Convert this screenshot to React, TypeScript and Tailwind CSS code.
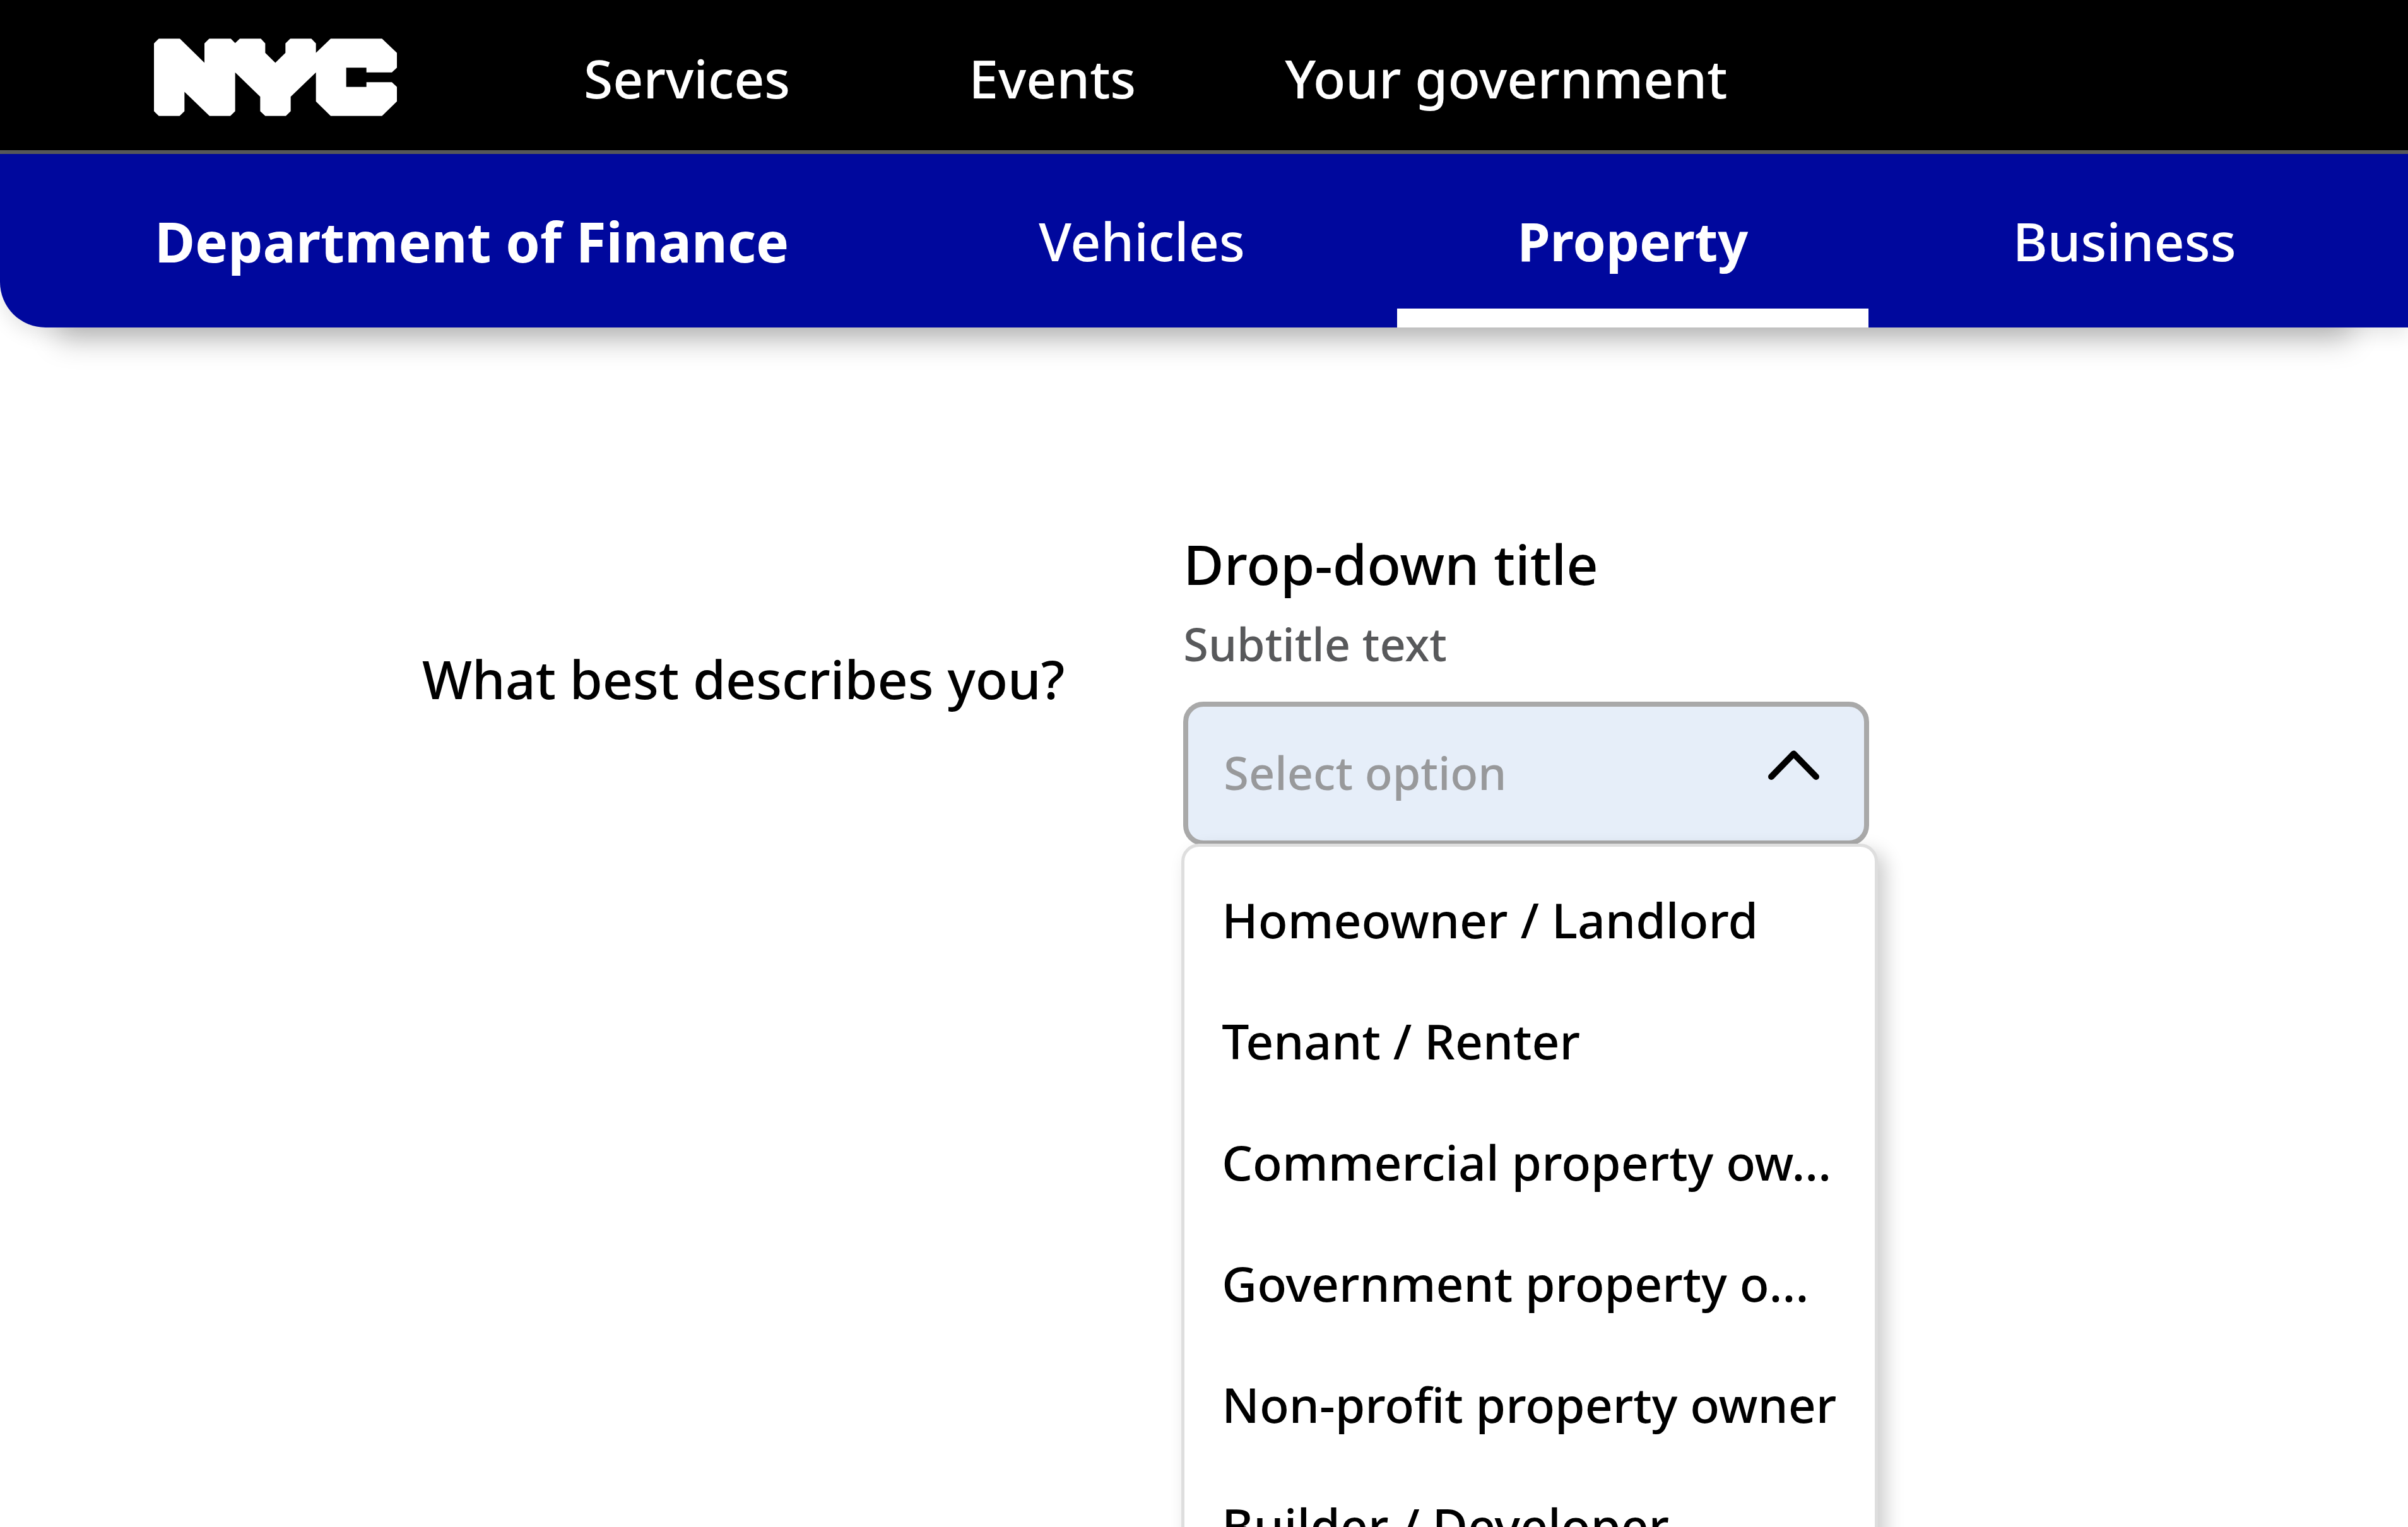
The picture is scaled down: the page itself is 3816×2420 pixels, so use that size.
const points = "155,92 255,92 372,207 372,115 395,92 497,92 518,113 540,92 640,92 661,115 661,160 709,207 757,160 757,115 780,92 880,92 902,115 902,160 972,92 1216,92 1287,160 1287,230 1263,253 1142,253 1142,230 1046,230 1046,322 1142,322 1142,299 1263,299 1287,322 1287,391 1216,460 972,460 902,391 902,253 782,368 782,437 759,460 661,460 637,437 637,368 518,253 518,437 495,460 396,460 277,345 277,437 254,460 155,460 132,437 132,115";

const options = [
  "Homeowner / Landlord",
  "Tenant / Renter",
  "Commercial property ow...",
  "Government property o...",
  "Non-profit property owner",
  "Builder / Developer",
];

export default function App() {
  return (
    <div className="relative h-[2420px] w-[3816px] overflow-hidden bg-white font-['Noto_Sans',sans-serif] text-[84px] font-medium leading-[116px] text-black">
      <header className="flex h-[244px] items-center border-b-[6px] border-[#58595b] bg-black text-white">
        <svg viewBox="132 92 1155 368" className="ml-[244px] mt-[7px] h-[123px] w-[385px] shrink-0 fill-white" aria-label="NYC">
          <polygon points={points} />
        </svg>
        <div className="flex pt-[10px]">
          <a className="ml-[296px]">Services</a>
          <a className="ml-[283px]">Events</a>
          <a className="ml-[236px]">Your government</a>
        </div>
      </header>

      <nav className="relative z-10 flex h-[275px] items-stretch rounded-bl-[72px] bg-[#00089d] pl-[245px] text-white shadow-[0_113px_45px_-91px_rgba(0,0,0,0.22),0_12px_30px_rgba(0,0,0,0.1)]">
        <div className="flex items-center text-[87.5px] font-bold">Department of Finance</div>
        <div className="ml-[396px] flex items-center">Vehicles</div>
        <div className="ml-[241px] flex w-[747px] items-center justify-center border-b-[30px] border-white pt-[30px] font-bold">Property</div>
        <div className="ml-[229px] flex items-center">Business</div>
      </nav>

      <main className="flex items-start pl-[669px] pt-[317px]">
        <div className="whitespace-nowrap pt-[182px]">What best describes you?</div>
        <div className="ml-[188px] w-[1087px]">
          <div className="text-[88px] leading-[114px]">Drop-down title</div>
          <div className="mt-[21px] text-[72px] leading-[98px] text-[#58595b]">Subtitle text</div>
          <div className="mt-[43px] flex h-[228px] items-center justify-between rounded-[32px] border-[8px] border-[#a9a9a9] bg-[#e6eef9] pl-[56px] pr-[71px] text-[72px] text-[#98999b]">
            <span className="-mt-[5px]">Select option</span>
            <svg viewBox="0 0 81 47" className="-mt-[27px] h-[47px] w-[81px] fill-none stroke-black stroke-[10px]" strokeLinecap="round" strokeLinejoin="round">
              <polyline points="5,42 40.5,5.5 76,42" />
            </svg>
          </div>
          <ul className="relative -ml-[3px] -mt-[3px] w-[1104px] rounded-[28px] border-[5px] border-[#dedede] bg-white pt-[20px] shadow-[12px_12px_30px_rgba(0,0,0,0.2)]">
            {options.map((o) => (
              <li key={o} className="flex h-[192px] items-center whitespace-nowrap pl-[59px] text-[76.8px]">{o}</li>
            ))}
          </ul>
        </div>
      </main>
    </div>
  );
}
